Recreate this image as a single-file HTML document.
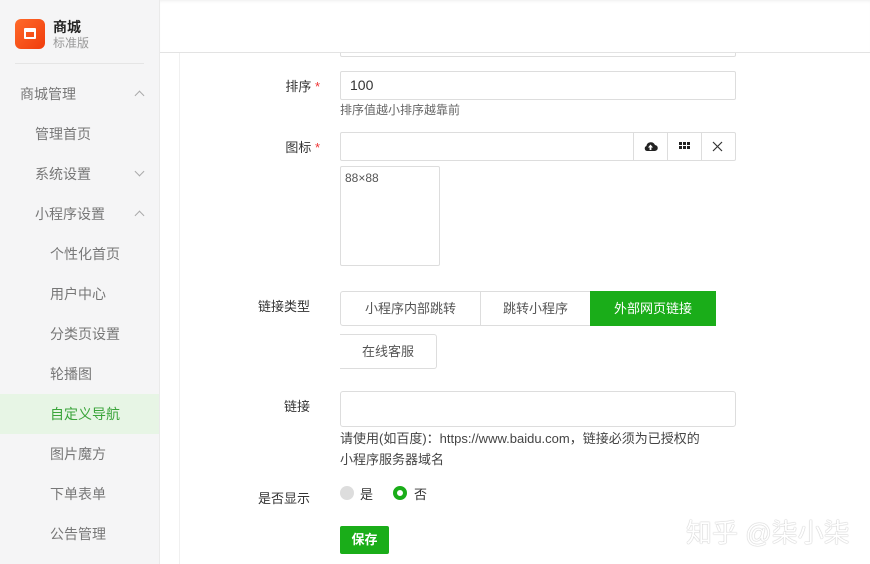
<!DOCTYPE html>
<html><head><meta charset="utf-8"><style>
*{box-sizing:border-box;margin:0;padding:0}
body{width:870px;height:564px;overflow:hidden;background:#fff;font-family:"Liberation Sans","Noto Sans CJK SC",sans-serif;font-size:13px;color:#333;position:relative}
.side{position:absolute;left:0;top:0;width:160px;height:564px;background:#f5f5f6;border-right:1px solid #eaeaea}
.logo{position:absolute;left:15px;top:19px;width:30px;height:30px;border-radius:6px;background:linear-gradient(135deg,#ff6a2a,#f03c0c)}
.logo i{position:absolute;left:9px;top:9px;width:12px;height:11px;border:2px solid #fff;border-top-width:4px;border-radius:1px}
.t1{position:absolute;left:53px;top:17px;font-size:14px;font-weight:bold;color:#222}
.t2{position:absolute;left:53px;top:34px;font-size:12px;color:#999}
.hr{position:absolute;left:15px;top:63px;width:129px;height:1px;background:#e5e5e5}
.m{position:absolute;font-size:14px;color:#777;left:0;width:159px;height:40px;line-height:40px}
.m.a{background:#e7f5e5;color:#3aa43a}
.ch{position:absolute;right:16px;top:16px;width:7px;height:7px;border-left:1px solid #aaa;border-top:1px solid #aaa}
.up{transform:rotate(45deg);top:18px}.dn{transform:rotate(225deg);top:14px}
.top{position:absolute;left:160px;top:0;width:710px;height:53px;border-bottom:1px solid #e3e3e3;background:#fff;box-shadow:inset 0 3px 3px -2px #eee}
.gut{position:absolute;left:160px;top:53px;width:20px;height:511px;background:#fff;border-right:1px solid #f0f0f0}
.lab{position:absolute;font-size:13px;color:#333;text-align:right;width:80px}
.req::after{content:" *";color:#e33}
.inp{position:absolute;border:1px solid #ddd;border-radius:2px;background:#fff}
.hint{position:absolute;font-size:12px;color:#666}
.btn{position:absolute;height:35px;line-height:33px;text-align:center;font-size:13px;color:#555;border:1px solid #ddd;background:#fff}
</style></head><body>
<div class="side">
<div class="logo"><i></i></div>
<div class="t1">商城</div><div class="t2">标准版</div>
<div class="hr"></div>
<div class="m" style="top:74px;padding-left:20px">商城管理<span class="ch up"></span></div>
<div class="m" style="top:114px;padding-left:35px">管理首页</div>
<div class="m" style="top:154px;padding-left:35px">系统设置<span class="ch dn"></span></div>
<div class="m" style="top:194px;padding-left:35px">小程序设置<span class="ch up"></span></div>
<div class="m" style="top:234px;padding-left:50px">个性化首页</div>
<div class="m" style="top:274px;padding-left:50px">用户中心</div>
<div class="m" style="top:314px;padding-left:50px">分类页设置</div>
<div class="m" style="top:354px;padding-left:50px">轮播图</div>
<div class="m a" style="top:394px;padding-left:50px">自定义导航</div>
<div class="m" style="top:434px;padding-left:50px">图片魔方</div>
<div class="m" style="top:474px;padding-left:50px">下单表单</div>
<div class="m" style="top:514px;padding-left:50px">公告管理</div>
</div>
<div class="inp" style="left:340px;top:30px;width:396px;height:27px"></div>
<div class="top"></div>
<div class="gut"></div>

<div class="lab req" style="left:240px;top:76px">排序</div>
<div class="inp" style="left:340px;top:71px;width:396px;height:29px;padding:5px 9px;font-size:14px;color:#333">100</div>
<div class="hint" style="left:340px;top:101px">排序值越小排序越靠前</div>

<div class="lab req" style="left:240px;top:137px">图标</div>
<div class="inp" style="left:340px;top:132px;width:396px;height:29px"></div>
<div style="position:absolute;left:633px;top:132px;width:1px;height:29px;background:#ddd"></div>
<div style="position:absolute;left:667px;top:132px;width:1px;height:29px;background:#ddd"></div>
<div style="position:absolute;left:701px;top:132px;width:1px;height:29px;background:#ddd"></div>
<svg style="position:absolute;left:643px;top:140px" width="15" height="12" viewBox="0 0 15 12"><path d="M4 11h7.5a3 3 0 0 0 .5-6 4.5 4.5 0 0 0-8.6 1A2.6 2.6 0 0 0 4 11z" fill="#222"/><path d="M7.5 4.5l-2.5 3h1.6v2.5h1.8V7.5H10z" fill="#fff"/></svg>
<svg style="position:absolute;left:679px;top:142px" width="11" height="8"><g fill="#222"><rect x="0" y="0" width="3" height="3"/><rect x="4" y="0" width="3" height="3"/><rect x="8" y="0" width="3" height="3"/><rect x="0" y="4" width="3" height="3"/><rect x="4" y="4" width="3" height="3"/><rect x="8" y="4" width="3" height="3"/></g></svg>
<svg style="position:absolute;left:712px;top:141px" width="11" height="11"><path d="M1 1L10 10M10 1L1 10" stroke="#333" stroke-width="1.2"/></svg>
<div class="inp" style="left:340px;top:166px;width:100px;height:100px;padding:4px;font-size:12px;color:#555">88×88</div>

<div class="lab" style="left:230px;top:296px">链接类型</div>
<div class="btn" style="left:340px;top:291px;width:141px;border-radius:3px 0 0 3px">小程序内部跳转</div>
<div class="btn" style="left:481px;top:291px;width:110px;border-left:none">跳转小程序</div>
<div class="btn" style="left:590px;top:291px;width:126px;background:#1aad19;border-color:#1aad19;color:#fff">外部网页链接</div>
<div class="btn" style="left:340px;top:334px;width:97px;border-left:none;border-radius:0 3px 3px 0">在线客服</div>

<div class="lab" style="left:230px;top:396px">链接</div>
<div class="inp" style="left:340px;top:391px;width:396px;height:36px;border-radius:3px"></div>
<div class="hint" style="left:340px;top:428px;font-size:13px;color:#444;line-height:21px">请使用(如百度)：https://www.baidu.com，链接必须为已授权的<br>小程序服务器域名</div>

<div class="lab" style="left:230px;top:488px">是否显示</div>
<div style="position:absolute;left:340px;top:486px;width:14px;height:14px;border-radius:50%;background:#ddd"></div>
<div style="position:absolute;left:360px;top:484px;font-size:13px">是</div>
<div style="position:absolute;left:393px;top:486px;width:14px;height:14px;border-radius:50%;border:4px solid #1aad19;background:#fff"></div>
<div style="position:absolute;left:414px;top:484px;font-size:13px">否</div>

<div style="position:absolute;left:340px;top:526px;width:49px;height:28px;background:#1aad19;border-radius:2px;color:#fff;font-weight:bold;text-align:center;line-height:28px;font-size:13px">保存</div>
<div style="position:absolute;left:686px;top:513px;font-size:26px;color:#fff;text-shadow:0 0 1px #aaa,0 0 1px #ccc">知乎 @柒小柒</div>
</body></html>
